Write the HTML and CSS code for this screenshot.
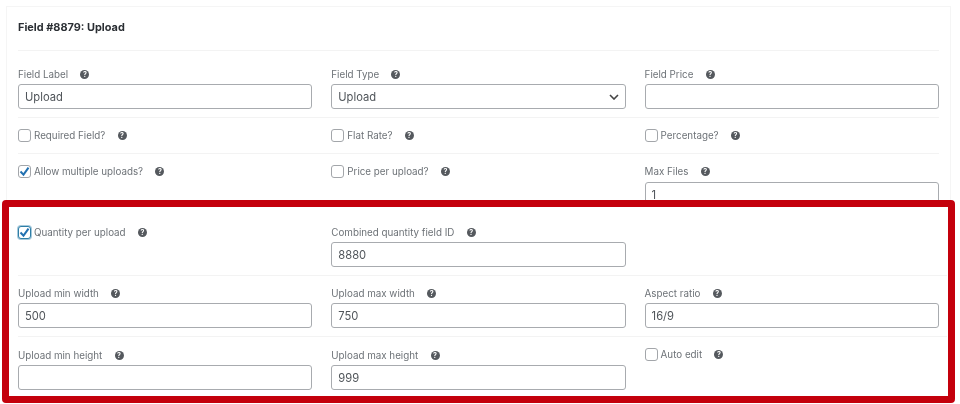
FILE: index.html
```html
<!DOCTYPE html>
<html lang="en">
<head>
    <meta charset="UTF-8">
    <title>Field #8879: Upload</title>
    <link rel="stylesheet" href="styles.css">
</head>
<body>
    <div class="card">
        <h3 class="card-title">Field #8879: Upload</h3>

        <div class="row">
            <div class="field">
                <div class="field-label">Field Label <span class="help">?</span></div>
                <input class="text-input" type="text" value="Upload">
            </div>
            <div class="field">
                <div class="field-label">Field Type <span class="help">?</span></div>
                <div class="select-wrap">
                    <select class="text-input"><option>Upload</option></select>
                    <svg class="chevron" width="10" height="6" viewBox="0 0 10 6"><path d="M1 1l4 4 4-4" fill="none" stroke="#444" stroke-width="1.6"/></svg>
                </div>
            </div>
            <div class="field">
                <div class="field-label">Field Price <span class="help">?</span></div>
                <input class="text-input" type="text">
            </div>
        </div>

        <div class="row check-row">
            <div class="check-label"><span class="box"></span>Required Field? <span class="help">?</span></div>
            <div class="check-label"><span class="box"></span>Flat Rate? <span class="help">?</span></div>
            <div class="check-label"><span class="box"></span>Percentage? <span class="help">?</span></div>
        </div>

        <div class="row check-row last">
            <div class="check-label"><span class="box"><svg width="13" height="13" viewBox="0 0 13 13"><path d="M2.5 6.5l3 3.2 5-7" fill="none" stroke="#2271b1" stroke-width="2"/></svg></span>Allow multiple uploads? <span class="help">?</span></div>
            <div class="check-label"><span class="box"></span>Price per upload? <span class="help">?</span></div>
            <div class="field">
                <div class="field-label">Max Files <span class="help">?</span></div>
                <input class="text-input" type="text" value="1">
            </div>
        </div>
    </div>

    <div class="highlight">
        <div class="row first">
            <div class="field-top">
                <div class="check-label"><span class="box focus"><svg width="13" height="13" viewBox="0 0 13 13"><path d="M2.5 6.5l3 3.2 5-7" fill="none" stroke="#2271b1" stroke-width="2"/></svg></span>Quantity per upload <span class="help">?</span></div>
            </div>
            <div class="field">
                <div class="field-label">Combined quantity field ID <span class="help">?</span></div>
                <input class="text-input" type="text" value="8880">
            </div>
            <div></div>
        </div>

        <div class="row second">
            <div class="field">
                <div class="field-label">Upload min width <span class="help">?</span></div>
                <input class="text-input" type="text" value="500">
            </div>
            <div class="field">
                <div class="field-label">Upload max width <span class="help">?</span></div>
                <input class="text-input" type="text" value="750">
            </div>
            <div class="field">
                <div class="field-label">Aspect ratio <span class="help">?</span></div>
                <input class="text-input" type="text" value="16/9">
            </div>
        </div>

        <div class="row third last">
            <div class="field">
                <div class="field-label">Upload min height <span class="help">?</span></div>
                <input class="text-input" type="text">
            </div>
            <div class="field">
                <div class="field-label">Upload max height <span class="help">?</span></div>
                <input class="text-input" type="text" value="999">
            </div>
            <div class="check-label"><span class="box"></span>Auto edit <span class="help">?</span></div>
        </div>
    </div>
</body>
</html>
```

FILE: styles.css
```css
body {
    margin: 0;
    background: #fff;
    font-family: "Inter", "Liberation Sans", sans-serif;
    color: #50575e;
    overflow: hidden;
    filter: blur(0.35px);
}

.card {
    box-sizing: border-box;
    width: 945px;
    height: 194px;
    margin: 6px 0 0 6px;
    padding: 0 11px;
    border: 1px solid #f5f5f5;
    border-bottom: none;
    overflow: hidden;
}

.card-title {
    margin: 0;
    height: 43px;
    line-height: 41px;
    font-size: 10.9px;
    font-weight: 700;
    color: #2a2e33;
    border-bottom: 1px solid #f3f3f3;
}

.row {
    display: grid;
    grid-template-columns: repeat(3, 294.3px);
    column-gap: 19px;
    padding: 16px 0 8px;
    border-bottom: 1px solid #f3f3f3;
}

.row.last {
    border-bottom: none;
}

.check-row {
    padding: 11px 0;
}

.check-row.last {
    padding-bottom: 0;
}

.check-row .field-label {
    margin-top: -1px;
    margin-bottom: 4px;
}

.field-label,
.check-label {
    display: flex;
    align-items: center;
    height: 14px;
    font-size: 9.8px;
    white-space: pre;
    color: #6d7277;
}

.field-label {
    margin-bottom: 3px;
}

.check-label {
    height: 13px;
}

.help {
    display: inline-block;
    width: 9px;
    height: 9px;
    margin-left: 9.5px;
    border-radius: 50%;
    background: #55595e;
    color: #fff;
    font-size: 7px;
    font-weight: 700;
    line-height: 9px;
    text-align: center;
}

.box {
    box-sizing: border-box;
    flex: none;
    display: block;
    width: 13px;
    height: 13px;
    margin-right: 3px;
    border: 1px solid #a3a6aa;
    border-radius: 3px;
    background: #fff;
}

.box svg {
    display: block;
    margin: -1px;
}

.box.focus {
    border: 1.5px solid #2e7ea6;
    box-shadow: 0 0 0 1px #a5c9dc;
}

.box.focus svg {
    margin: -1.5px;
}

.text-input {
    box-sizing: border-box;
    display: block;
    width: 100%;
    height: 25px;
    margin: 0;
    padding: 0 6px;
    border: 1px solid #a8abaf;
    border-radius: 3px;
    background: #fff;
    font-family: inherit;
    font-size: 11.2px;
    color: #50555a;
    outline: none;
    appearance: none;
}

.select-wrap {
    position: relative;
}

.chevron {
    position: absolute;
    top: 10px;
    right: 7px;
}

.highlight {
    box-sizing: border-box;
    width: 953px;
    height: 203px;
    margin-left: 2px;
    padding: 0 1px 0 9px;
    border: 7px solid #c4000c;
    border-radius: 4px;
    background: #fff;
}

.row.first {
    padding-top: 18px;
}

.row.second {
    padding-top: 10px;
}

.row.third {
    padding-top: 11px;
}

.field-top {
    padding-top: 1px;
}
```
